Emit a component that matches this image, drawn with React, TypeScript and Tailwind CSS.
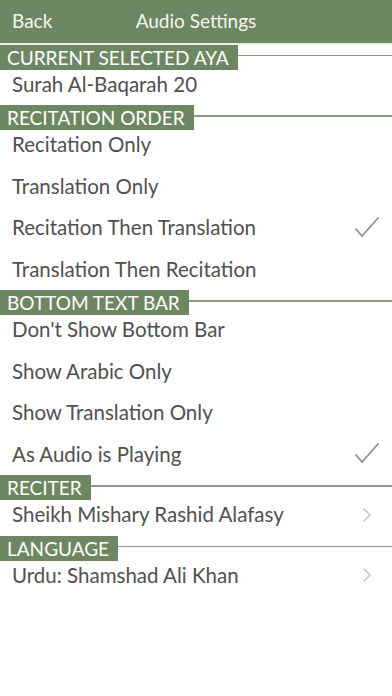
import React from "react";

const font = { fontFamily: "Lato, 'Open Sans', sans-serif" };

function Check() {
  return (
    <svg width="26" height="24" viewBox="0 0 26 24" className="shrink-0">
      <path d="M2 13 L8 20 L24 2" fill="none" stroke="#8c8c8c" strokeWidth="1.7" strokeLinecap="round" strokeLinejoin="round" />
    </svg>
  );
}

function Chevron() {
  return (
    <svg width="10" height="16" viewBox="0 0 10 16" className="shrink-0">
      <path d="M2 2 L8 8 L2 14" fill="none" stroke="#c2c2c2" strokeWidth="1.5" strokeLinecap="round" strokeLinejoin="round" />
    </svg>
  );
}

function Header({ title }: { title: string }) {
  return (
    <div className="flex h-[25px] items-start">
      <div className="h-[25px] bg-[#6d8762] pl-[7px] pr-[9px] text-[19px] leading-[26px] text-white whitespace-nowrap">
        {title}
      </div>
      <div className="mt-[10px] h-[1.5px] flex-1 bg-[#8a9c80]" />
    </div>
  );
}

type Row = { label: string; right?: "check" | "chevron" };

function Section({ title, rows }: { title: string; rows: Row[] }) {
  return (
    <div>
      <Header title={title} />
      <div className="-mt-[6px]">
        {rows.map((r) => (
          <div key={r.label} className="flex h-[41.5px] items-center justify-between pl-[12px] pr-[12px]">
            <span className="text-[20.5px] text-[#505050] whitespace-nowrap">{r.label}</span>
            {r.right === "check" && <Check />}
            {r.right === "chevron" && <span className="pr-[8px]"><Chevron /></span>}
          </div>
        ))}
      </div>
    </div>
  );
}

export default function App() {
  return (
    <div className="h-[696px] w-[392px] overflow-hidden bg-white" style={font}>
      <div className="relative flex h-[43px] items-center bg-[#6d8762] text-[19px] text-[#f4f6f2]">
        <span className="pl-[12px]">Back</span>
        <span className="absolute left-0 right-0 text-center">Audio Settings</span>
      </div>
      <div className="h-[1.5px] bg-[#e9ede6]" />
      <div>
        <Section title="CURRENT SELECTED AYA" rows={[{ label: "Surah Al-Baqarah 20" }]} />
        <Section
          title="RECITATION ORDER"
          rows={[
            { label: "Recitation Only" },
            { label: "Translation Only" },
            { label: "Recitation Then Translation", right: "check" },
            { label: "Translation Then Recitation" },
          ]}
        />
        <Section
          title="BOTTOM TEXT BAR"
          rows={[
            { label: "Don't Show Bottom Bar" },
            { label: "Show Arabic Only" },
            { label: "Show Translation Only" },
            { label: "As Audio is Playing", right: "check" },
          ]}
        />
        <Section title="RECITER" rows={[{ label: "Sheikh Mishary Rashid Alafasy", right: "chevron" }]} />
        <Section title="LANGUAGE" rows={[{ label: "Urdu: Shamshad Ali Khan", right: "chevron" }]} />
      </div>
    </div>
  );
}
